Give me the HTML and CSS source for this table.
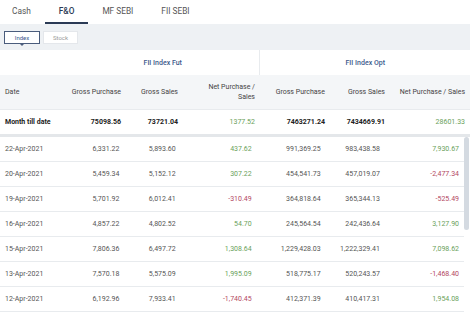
FILE: index.html
```html
<!DOCTYPE html>
<html lang="en">
<head>
    <meta charset="UTF-8">
    <meta name="viewport" content="width=device-width, initial-scale=1.0">
    <title>FII Derivatives</title>
    <link rel="stylesheet" href="styles.css">
</head>
<body>

    <nav class="tabs">
        <a class="tab">Cash</a>
        <a class="tab active">F&amp;O</a>
        <a class="tab">MF SEBI</a>
        <a class="tab">FII SEBI</a>
    </nav>

    <div class="toolbar">
        <button class="toggle active">Index</button>
        <button class="toggle">Stock</button>
    </div>

    <div class="fii-table">
        <table class="head-table">
            <colgroup>
                <col class="c-date"><col class="c-gp"><col class="c-gs"><col class="c-net">
                <col class="c-gp2"><col class="c-gs2"><col class="c-net2">
            </colgroup>
            <tr class="group-row">
                <th></th>
                <th colspan="3">FII Index Fut</th>
                <th colspan="3" class="split">FII Index Opt</th>
            </tr>
            <tr class="label-row">
                <th class="left">Date</th>
                <th>Gross Purchase</th>
                <th>Gross Sales</th>
                <th>Net Purchase /<br>Sales</th>
                <th>Gross Purchase</th>
                <th>Gross Sales</th>
                <th>Net Purchase / Sales</th>
            </tr>
            <tr class="total-row">
                <td class="left">Month till date</td>
                <td>75098.56</td>
                <td>73721.04</td>
                <td class="pos">1377.52</td>
                <td>7463271.24</td>
                <td>7434669.91</td>
                <td class="pos">28601.33</td>
            </tr>
        </table>

        <div class="scroll-body">
            <table class="body-table">
                <colgroup>
                    <col class="c-date"><col class="c-gp"><col class="c-gs"><col class="c-net">
                    <col class="c-gp2"><col class="c-gs2"><col class="c-net2">
                </colgroup>
                <tr><td class="left">22-Apr-2021</td><td>6,331.22</td><td>5,893.60</td><td class="pos">437.62</td><td>991,369.25</td><td>983,438.58</td><td class="pos">7,930.67</td></tr>
                <tr><td class="left">20-Apr-2021</td><td>5,459.34</td><td>5,152.12</td><td class="pos">307.22</td><td>454,541.73</td><td>457,019.07</td><td class="neg">-2,477.34</td></tr>
                <tr><td class="left">19-Apr-2021</td><td>5,701.92</td><td>6,012.41</td><td class="neg">-310.49</td><td>364,818.64</td><td>365,344.13</td><td class="neg">-525.49</td></tr>
                <tr><td class="left">16-Apr-2021</td><td>4,857.22</td><td>4,802.52</td><td class="pos">54.70</td><td>245,564.54</td><td>242,436.64</td><td class="pos">3,127.90</td></tr>
                <tr><td class="left">15-Apr-2021</td><td>7,806.36</td><td>6,497.72</td><td class="pos">1,308.64</td><td>1,229,428.03</td><td>1,222,329.41</td><td class="pos">7,098.62</td></tr>
                <tr><td class="left">13-Apr-2021</td><td>7,570.18</td><td>5,575.09</td><td class="pos">1,995.09</td><td>518,775.17</td><td>520,243.57</td><td class="neg">-1,468.40</td></tr>
                <tr><td class="left">12-Apr-2021</td><td>6,192.96</td><td>7,933.41</td><td class="neg">-1,740.45</td><td>412,371.39</td><td>410,417.31</td><td class="pos">1,954.08</td></tr>
            </table>
            <div class="scrollbar"><div class="thumb"></div></div>
        </div>
    </div>

</body>
</html>
```

FILE: styles.css
```css
:root {
    --navy: #2b3a55; --blue-text: #3d5a8c;
    --band: #eef1f4; --head-bg: #f4f6f8; --line: #e8ebee;
    --text: #555; --text-strong: #222;
    --pos: #6a9f5b; --neg: #b3485f;
    --font-family: Roboto, 'Liberation Sans', sans-serif;
}
* { margin: 0; padding: 0; box-sizing: border-box; }
body { font-family: var(--font-family); background-color: #fff; color: var(--text); overflow: hidden; }

.tabs { display: flex; height: 24px; margin-left: -2px; }
.tab { display: flex; align-items: center; padding: 0 14px; font-size: 8.3px; color: #555; border-bottom: 2px solid transparent; }
.tab.active { color: var(--navy); font-weight: 500; border-bottom-color: var(--navy); }

.toolbar { display: flex; gap: 3px; height: 26px; padding: 7px 4px 0; background-color: var(--band); width: 470px; }
.toggle { position: relative; width: 36px; height: 13px; font-family: var(--font-family); font-size: 6px; color: #999; background-color: #fff; border: 1px solid #e4e7eb; }
.toggle + .toggle { width: 35px; }
.toggle.active { color: var(--blue-text); border-color: #4a5c7c; }
.toggle.active::after { content: ''; position: absolute; left: 50%; bottom: -3px; margin-left: -2px; border-left: 2px solid transparent; border-right: 2px solid transparent; border-top: 2px solid #4a5c7c; }

.fii-table { width: 470px; }
table { width: 100%; border-collapse: collapse; table-layout: fixed; font-size: 7px; }
.c-date { width: 14.04%; } .c-gp { width: 12.77%; } .c-gs { width: 12.13%; } .c-net { width: 16.38%; }
.c-gp2 { width: 14.89%; } .c-gs2 { width: 12.77%; } .c-net2 { width: 17.02%; }
th, td { text-align: right; padding: 0 5px; white-space: nowrap; }
.left { text-align: left; }

.group-row th { height: 25px; color: var(--blue-text); font-weight: 500; text-align: center; }
.group-row .split { border-left: 1px solid var(--line); }
.label-row th { height: 34px; background-color: var(--head-bg); font-weight: 400; color: #444; line-height: 10px; border-bottom: 1px solid var(--line); }
.total-row td { height: 26px; font-weight: 700; color: var(--text-strong); border-bottom: 3px solid #e4e7ea; }
.total-row td.pos { font-weight: 400; color: var(--pos); }

.scroll-body { display: flex; height: 175px; }
.body-table { flex: 1; }
.body-table td { height: 25px; border-bottom: 1px solid var(--line); }
.scrollbar { width: 6px; padding-right: 1px; }
.thumb { height: 93px; background-color: #d4dae1; border-radius: 3px; }

.pos { color: var(--pos); }
.neg { color: var(--neg); }
```
